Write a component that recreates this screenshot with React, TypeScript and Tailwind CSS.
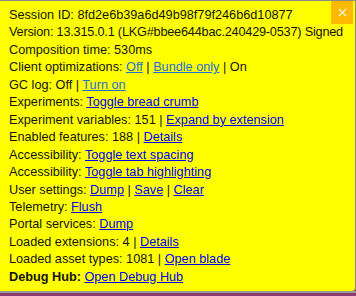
import React from 'react';

type Part = { text: string; link?: 'a' | 'b'; bold?: boolean };

const ROWS: Part[][] = [
  [{ text: 'Session ID: 8fd2e6b39a6d49b98f79f246b6d10877' }],
  [{ text: 'Version: 13.315.0.1 (LKG#bbee644bac.240429-0537) Signed' }],
  [{ text: 'Composition time: 530ms' }],
  [
    { text: 'Client optimizations: ' },
    { text: 'Off', link: 'b' },
    { text: ' | ' },
    { text: 'Bundle only', link: 'b' },
    { text: ' | On' },
  ],
  [{ text: 'GC log: Off | ' }, { text: 'Turn on', link: 'b' }],
  [{ text: 'Experiments: ' }, { text: 'Toggle bread crumb', link: 'a' }],
  [{ text: 'Experiment variables: 151 | ' }, { text: 'Expand by extension', link: 'a' }],
  [{ text: 'Enabled features: 188 | ' }, { text: 'Details', link: 'a' }],
  [{ text: 'Accessibility: ' }, { text: 'Toggle text spacing', link: 'a' }],
  [{ text: 'Accessibility: ' }, { text: 'Toggle tab highlighting', link: 'a' }],
  [
    { text: 'User settings: ' },
    { text: 'Dump', link: 'a' },
    { text: ' | ' },
    { text: 'Save', link: 'a' },
    { text: ' | ' },
    { text: 'Clear', link: 'a' },
  ],
  [{ text: 'Telemetry: ' }, { text: 'Flush', link: 'a' }],
  [{ text: 'Portal services: ' }, { text: 'Dump', link: 'a' }],
  [{ text: 'Loaded extensions: 4 | ' }, { text: 'Details', link: 'a' }],
  [{ text: 'Loaded asset types: 1081 | ' }, { text: 'Open blade', link: 'a' }],
  [{ text: 'Debug Hub:', bold: true }, { text: ' ' }, { text: 'Open Debug Hub', link: 'a' }],
];

export default function App() {
  return (
    <div className="w-[356px] h-[296px] overflow-hidden bg-[#8c3b6e] font-['Liberation_Sans',Arial,sans-serif]">
      <div className="relative h-[291px] bg-[#ffff00] border-t border-r border-[#8a8a8a] rounded-br-[4px] pl-[9px] pt-[6px] text-[12.7px] leading-[17.45px] text-[#141414] whitespace-nowrap">
        <button
          type="button"
          className="absolute right-[2px] top-0 w-[22px] h-[23px] bg-[#ffb900] flex items-center justify-center"
        >
          <svg width="9" height="9" viewBox="0 0 10 10">
            <path d="M1 1L9 9M9 1L1 9" stroke="#ffffff" strokeWidth="1.3" />
          </svg>
        </button>
        {ROWS.map((row, i) => (
          <div key={i} className={i === 1 ? 'tracking-[-0.2px]' : ''}>
            {row.map((p, j) =>
              p.link ? (
                <a
                  key={j}
                  href="#"
                  className={`underline ${p.link === 'b' ? 'text-[#1f6fd8]' : 'text-[#0000ee]'}`}
                >
                  {p.text}
                </a>
              ) : (
                <span key={j} className={p.bold ? 'font-bold' : ''}>
                  {p.text}
                </span>
              )
            )}
          </div>
        ))}
      </div>
      <div className="h-[2px] bg-[#9a9a9a]" />
    </div>
  );
}
